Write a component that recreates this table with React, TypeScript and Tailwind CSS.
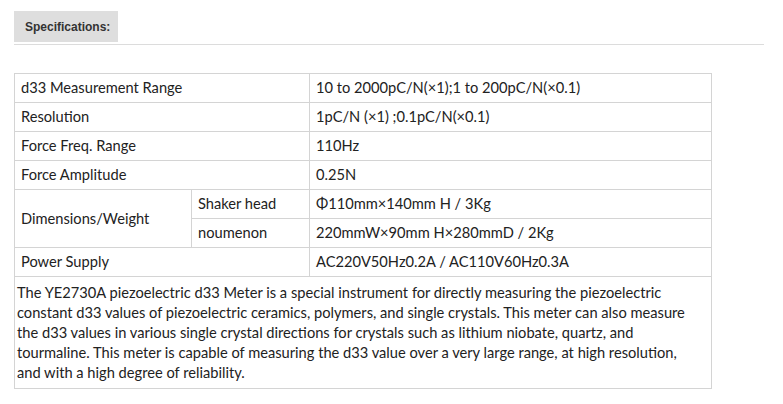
import React from "react";

const rows: [string, string][] = [
  ["d33 Measurement Range", "10 to 2000pC/N(×1);1 to 200pC/N(×0.1)"],
  ["Resolution", "1pC/N (×1) ;0.1pC/N(×0.1)"],
  ["Force Freq. Range", "110Hz"],
  ["Force Amplitude", "0.25N"],
];

const cell = "border border-[#d4d4d4] h-[29px] py-0 pl-[6px] align-middle";

export default function App() {
  return (
    <div className="min-h-[404px] w-[783px] bg-white pl-[14px] pt-[11px] text-[#222]">
      <div className="w-[750px]">
        <div className="flex h-[31px] w-[104px] items-center bg-[#dedede] pl-[11px] text-[12px] font-bold text-[#333] [font-family:'Liberation_Sans',Arial,sans-serif]">
          Specifications:
        </div>
        <div className="mt-[2px] h-px w-[750px] bg-[#dcdcdc]" />
      </div>
      <table
        className="mt-[28px] w-[697px] table-fixed border-collapse text-[14.67px] [font-family:Lato,'Open_Sans',sans-serif]"
      >
        <colgroup>
          <col className="w-[177px]" />
          <col className="w-[118px]" />
          <col className="w-[402px]" />
        </colgroup>
        <tbody>
          {rows.map(([k, v]) => (
            <tr key={k}>
              <td colSpan={2} className={cell}>{k}</td>
              <td className={cell}>{v}</td>
            </tr>
          ))}
          <tr>
            <td rowSpan={2} className={cell}>Dimensions/Weight</td>
            <td className={cell}>Shaker head</td>
            <td className={cell}>Φ110mm×140mm H / 3Kg</td>
          </tr>
          <tr>
            <td className={cell}>noumenon</td>
            <td className={cell}>220mmW×90mm H×280mmD / 2Kg</td>
          </tr>
          <tr>
            <td colSpan={2} className={cell}>Power Supply</td>
            <td className={cell}>AC220V50Hz0.2A / AC110V60Hz0.3A</td>
          </tr>
          <tr>
            <td colSpan={3} className="border border-[#d4d4d4] pb-[5px] pl-[2px] pt-[6px] align-top leading-[20px]">
              <span className="block whitespace-nowrap">The YE2730A piezoelectric d33 Meter is a special instrument for directly measuring the piezoelectric</span>
              <span className="block whitespace-nowrap">constant d33 values of piezoelectric ceramics, polymers, and single crystals. This meter can also measure</span>
              <span className="block whitespace-nowrap">the d33 values in various single crystal directions for crystals such as lithium niobate, quartz, and</span>
              <span className="block whitespace-nowrap">tourmaline. This meter is capable of measuring the d33 value over a very large range, at high resolution,</span>
              <span className="block whitespace-nowrap">and with a high degree of reliability.</span>
            </td>
          </tr>
        </tbody>
      </table>
    </div>
  );
}
